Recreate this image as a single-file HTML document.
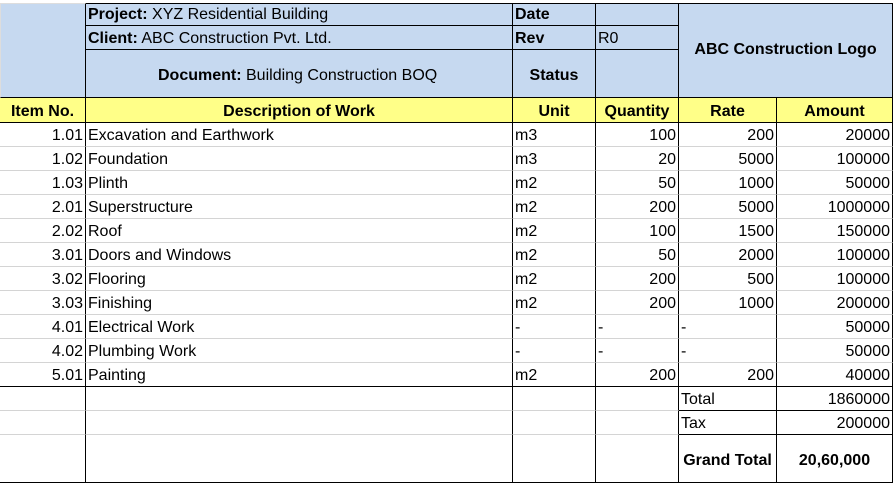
<!DOCTYPE html>
<html><head><meta charset="utf-8"><style>
body{margin:0;background:#fff;width:895px;height:485px;overflow:hidden;font-family:"Liberation Sans",Arial,sans-serif;font-size:16px;color:#000}
table{position:absolute;left:0;top:3px;border-collapse:separate;border-spacing:0;table-layout:fixed}
td{border-right:1px solid #000;border-bottom:1px solid #d4d4d4;padding:0 2px 1px 2px;white-space:nowrap;overflow:hidden;box-sizing:border-box;vertical-align:bottom;line-height:18px}
.b{background:#c6d9f0}
.y{background:#ffff88;font-weight:bold;text-align:center;border-bottom:1px solid #000}
.hb{border-bottom:1px solid #000}
.r{text-align:right}
.c{text-align:center}
.m{vertical-align:middle}
</style></head><body>
<table>
<colgroup><col style="width:86px"><col style="width:427px"><col style="width:83px"><col style="width:83px"><col style="width:98px"><col style="width:116px"></colgroup>
<tr style="height:23px">
<td class="b hb" rowspan="3" style="border-top:1px solid #ddd;border-left:1px solid #ddd"></td>
<td class="b hb" style="border-top:1px solid #000"><b>Project:</b> XYZ Residential Building</td>
<td class="b hb" style="border-top:1px solid #000"><b>Date</b></td>
<td class="b hb" style="border-top:1px solid #000"></td>
<td class="b hb c m" colspan="2" rowspan="3" style="border-top:1px solid #000"><b>ABC Construction Logo</b></td></tr>
<tr style="height:24px"><td class="b hb"><b>Client:</b> ABC Construction Pvt. Ltd.</td><td class="b hb"><b>Rev</b></td><td class="b hb">R0</td></tr>
<tr style="height:48px"><td class="b hb" style="padding-left:72px;padding-bottom:12px"><b>Document:</b> Building Construction BOQ</td><td class="b hb c" style="padding-bottom:12px"><b>Status</b></td><td class="b hb"></td></tr>
<tr style="height:25px"><td class="y">Item No.</td><td class="y">Description of Work</td><td class="y">Unit</td><td class="y">Quantity</td><td class="y">Rate</td><td class="y">Amount</td></tr>
<tr style="height:24px"><td class="r">1.01</td><td>Excavation and Earthwork</td><td>m3</td><td class="r">100</td><td class="r">200</td><td class="r">20000</td></tr>
<tr style="height:24px"><td class="r">1.02</td><td>Foundation</td><td>m3</td><td class="r">20</td><td class="r">5000</td><td class="r">100000</td></tr>
<tr style="height:24px"><td class="r">1.03</td><td>Plinth</td><td>m2</td><td class="r">50</td><td class="r">1000</td><td class="r">50000</td></tr>
<tr style="height:24px"><td class="r">2.01</td><td>Superstructure</td><td>m2</td><td class="r">200</td><td class="r">5000</td><td class="r">1000000</td></tr>
<tr style="height:24px"><td class="r">2.02</td><td>Roof</td><td>m2</td><td class="r">100</td><td class="r">1500</td><td class="r">150000</td></tr>
<tr style="height:24px"><td class="r">3.01</td><td>Doors and Windows</td><td>m2</td><td class="r">50</td><td class="r">2000</td><td class="r">100000</td></tr>
<tr style="height:24px"><td class="r">3.02</td><td>Flooring</td><td>m2</td><td class="r">200</td><td class="r">500</td><td class="r">100000</td></tr>
<tr style="height:24px"><td class="r">3.03</td><td>Finishing</td><td>m2</td><td class="r">200</td><td class="r">1000</td><td class="r">200000</td></tr>
<tr style="height:24px"><td class="r">4.01</td><td>Electrical Work</td><td>-</td><td>-</td><td>-</td><td class="r">50000</td></tr>
<tr style="height:24px"><td class="r">4.02</td><td>Plumbing Work</td><td>-</td><td>-</td><td>-</td><td class="r">50000</td></tr>
<tr style="height:24px"><td class="r hb">5.01</td><td class="hb">Painting</td><td class="hb">m2</td><td class="r hb">200</td><td class="r hb">200</td><td class="r hb">40000</td></tr>
<tr style="height:24px"><td></td><td></td><td></td><td></td><td class="hb">Total</td><td class="r hb">1860000</td></tr>
<tr style="height:24px"><td></td><td></td><td></td><td></td><td class="hb">Tax</td><td class="r hb">200000</td></tr>
<tr style="height:48px"><td class="hb"></td><td class="hb"></td><td class="hb"></td><td class="hb"></td><td class="hb c" style="padding-bottom:12px"><b>Grand Total</b></td><td class="hb c" style="padding-bottom:12px"><b>20,60,000</b></td></tr>
</table>
</body></html>
